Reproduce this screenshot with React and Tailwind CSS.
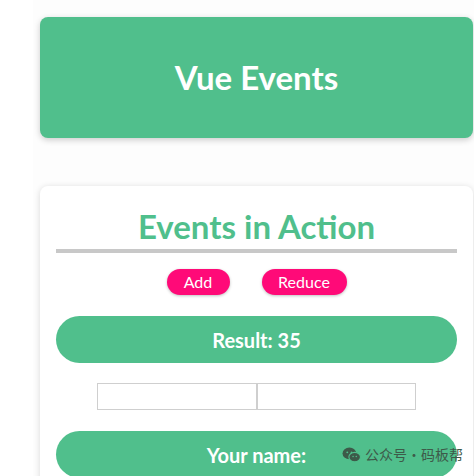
import React, { useState } from "react";

const App = () => {
  const [count, setCount] = useState(35);
  const [first, setFirst] = useState("");
  const [last, setLast] = useState("");

  return (
    <div className="min-h-[476px] bg-white font-['Lato',sans-serif]">
      <div className="ml-[33px] min-h-[476px] bg-[#fdfdfd] pl-[7px] pr-px pt-[17px]">
        <header className="flex h-[121px] items-center justify-center rounded-lg bg-[#50bf8c] shadow-[0_2px_6px_rgba(0,0,0,0.2)]">
          <h1 className="text-[33px] font-bold text-white">Vue Events</h1>
        </header>

        <section className="relative mt-[48px] rounded-lg bg-white px-4 pt-[20px] pb-4 shadow-[0_1px_6px_rgba(0,0,0,0.15)]">
          <h2 className="text-center text-[33px] leading-[40px] font-bold text-[#50bf8c]">
            Events in Action
          </h2>
          <div className="mt-[3px] h-1 bg-[#c8c8c8]" />

          <div className="mt-4 flex justify-center gap-8">
            <button
              onClick={() => setCount(count + 1)}
              className="h-[26px] w-[63px] rounded-full bg-[#ff0a78] text-[16px] text-white shadow-[0_1px_3px_rgba(0,0,0,0.25)]"
            >
              Add
            </button>
            <button
              onClick={() => setCount(count - 1)}
              className="h-[26px] w-[85px] rounded-full bg-[#ff0a78] text-[16px] text-white shadow-[0_1px_3px_rgba(0,0,0,0.25)]"
            >
              Reduce
            </button>
          </div>

          <div className="mt-[21px] flex h-[47px] items-center justify-center rounded-full bg-[#50bf8c] text-[20px] font-bold text-white">
            Result: {count}
          </div>

          <div className="mt-5 flex justify-center">
            <input
              value={first}
              onChange={(e) => setFirst(e.target.value)}
              className="h-[27px] w-[160px] border border-[#cfcfcf] bg-white outline-none"
            />
            <input
              value={last}
              onChange={(e) => setLast(e.target.value)}
              className="h-[27px] w-[159px] border border-[#cfcfcf] bg-white outline-none"
            />
          </div>

          <div className="mt-[21px] flex h-[47px] items-center justify-center rounded-full bg-[#50bf8c] text-[20px] font-bold text-white">
            Your name: {first} {last}
          </div>

          <div className="absolute top-[258px] left-[302px] flex items-center gap-1 whitespace-nowrap font-['Noto_Sans_CJK_SC',sans-serif] text-[14px] text-[#3d5a49]">
            <svg width="19" height="16" viewBox="0 0 18 15" fill="#3d5a49">
              <ellipse cx="7" cy="6" rx="6.5" ry="5.5" />
              <ellipse cx="12" cy="9.5" rx="5.5" ry="4.5" stroke="#50bf8c" strokeWidth="1" />
              <circle cx="5" cy="5" r="0.9" fill="#50bf8c" />
              <circle cx="9" cy="5" r="0.9" fill="#50bf8c" />
              <circle cx="10.5" cy="9" r="0.7" fill="#50bf8c" />
              <circle cx="13.5" cy="9" r="0.7" fill="#50bf8c" />
            </svg>
            <span>公众号·码板帮</span>
          </div>
        </section>
      </div>
    </div>
  );
};

export default App;
